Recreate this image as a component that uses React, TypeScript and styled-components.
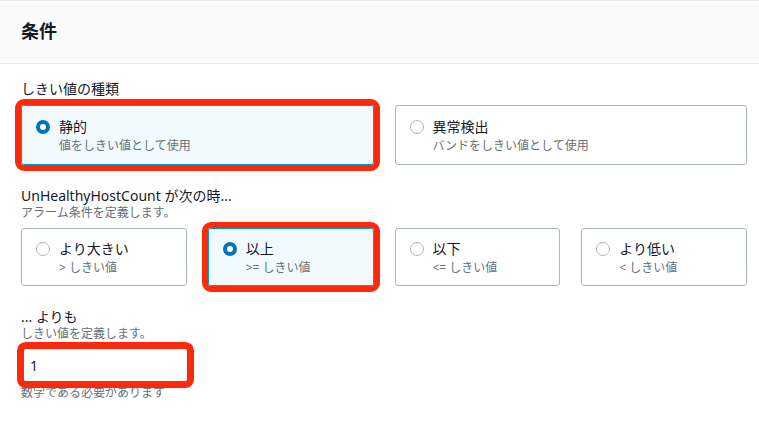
import React from 'react';
import styled, { createGlobalStyle } from 'styled-components';

const GlobalStyle = createGlobalStyle`
  html, body {
    margin: 0;
    padding: 0;
    background: #ffffff;
  }
  body {
    font-family: "Noto Sans", "Noto Sans CJK JP", sans-serif;
    color: #16191f;
    -webkit-font-smoothing: antialiased;
  }
`;

interface Option {
  key: string;
  title: string;
  description: string;
}

const thresholdTypes: Option[] = [
  { key: 'static', title: '静的', description: '値をしきい値として使用' },
  { key: 'anomaly', title: '異常検出', description: 'バンドをしきい値として使用' }
];

const conditions: Option[] = [
  { key: 'gt', title: 'より大きい', description: '> しきい値' },
  { key: 'gte', title: '以上', description: '>= しきい値' },
  { key: 'lte', title: '以下', description: '<= しきい値' },
  { key: 'lt', title: 'より低い', description: '< しきい値' }
];

const RadioTile = (props: { option: Option; checked: boolean; compact?: boolean }) => {
  const { option, checked, compact } = props;
  return (
    <Tile checked={checked} compact={!!compact}>
      <Radio checked={checked} />
      <TileText>
        <TileTitle>{option.title}</TileTitle>
        <TileDesc>{option.description}</TileDesc>
      </TileText>
    </Tile>
  );
};

const App = () => {
  return (
    <>
      <GlobalStyle />
      <Panel>
        <Header>
          <Title>条件</Title>
        </Header>
        <Body>
          <Field>
            <Label>しきい値の種類</Label>
            <Grid cols={2}>
              {thresholdTypes.map(option => (
                <RadioTile
                  key={option.key}
                  option={option}
                  checked={option.key === 'static'}
                />
              ))}
            </Grid>
          </Field>

          <Field>
            <div>
              <Label>UnHealthyHostCount が次の時...</Label>
              <Hint>アラーム条件を定義します。</Hint>
            </div>
            <Grid cols={4}>
              {conditions.map(option => (
                <RadioTile
                  key={option.key}
                  option={option}
                  checked={option.key === 'gte'}
                  compact
                />
              ))}
            </Grid>
          </Field>

          <Field>
            <div>
              <Label>... よりも</Label>
              <Hint>しきい値を定義します。</Hint>
            </div>
            <InputWrap>
              <Input defaultValue='1' />
            </InputWrap>
            <Help>数字である必要があります</Help>
          </Field>
        </Body>
      </Panel>
    </>
  );
};

const Panel = styled.div`
  width: 759px;
  height: 421px;
  overflow: hidden;
  background: #ffffff;
`;

const Header = styled.header`
  height: 64px;
  box-sizing: border-box;
  display: flex;
  align-items: center;
  padding: 0 21px 4px;
  background: #fafafa;
  border-top: 1px solid #eaeded;
  border-bottom: 1px solid #eaeded;
`;

const Title = styled.h2`
  margin: 0;
  font-size: 18px;
  font-weight: 700;
  color: #16191f;
`;

const Body = styled.div`
  padding: 16px 12px 0 21px;
  display: flex;
  flex-direction: column;
  gap: 22px;
`;

const Field = styled.div`
  display: flex;
  flex-direction: column;
  gap: 7px;
`;

const Label = styled.div`
  font-size: 14px;
  line-height: 18px;
  color: #16191f;
`;

const Hint = styled.div`
  font-size: 12px;
  line-height: 16px;
  color: #687078;
`;

const Grid = styled.div<{ cols: number }>`
  display: grid;
  grid-template-columns: repeat(${p => p.cols}, 1fr);
  column-gap: 21px;
  width: 726px;
`;

const Tile = styled.div<{ checked: boolean; compact: boolean }>`
  display: flex;
  align-items: flex-start;
  gap: 9px;
  height: ${p => (p.compact ? '58px' : '60px')};
  box-sizing: border-box;
  padding: ${p => (p.compact ? '10px 14px' : '11px 14px')};
  border: 1px solid ${p => (p.checked ? '#00a1c9' : '#aab7b8')};
  border-radius: 3px;
  background: ${p => (p.checked ? '#f1faff' : '#ffffff')};
  outline: ${p => (p.checked ? '6px solid #fb2a0c' : 'none')};
`;

const Radio = styled.span<{ checked: boolean }>`
  flex: none;
  width: 14px;
  height: 14px;
  margin-top: 3px;
  box-sizing: border-box;
  border-radius: 50%;
  border: ${p => (p.checked ? '4px solid #0073bb' : '1px solid #aab7b8')};
  background: #ffffff;
`;

const TileText = styled.div`
  display: flex;
  flex-direction: column;
`;

const TileTitle = styled.div`
  font-size: 14px;
  line-height: 20px;
  color: #16191f;
`;

const TileDesc = styled.div`
  font-size: 12px;
  line-height: 18px;
  color: #687078;
`;

const InputWrap = styled.div`
  position: relative;
  z-index: 1;
  width: 163px;
  margin-left: 3px;
  box-shadow: 0 0 0 7px #fb2a0c;
  border-radius: 3px;
  background: #ffffff;
`;

const Input = styled.input`
  display: block;
  width: 100%;
  height: 32px;
  box-sizing: border-box;
  padding: 0 6px;
  border: none;
  border-radius: 2px;
  font-family: "Noto Sans", "Noto Sans CJK JP", sans-serif;
  font-size: 14px;
  color: #16191f;
  outline: none;
`;

const Help = styled.div`
  font-size: 12px;
  line-height: 16px;
  color: #687078;
  margin-top: -3px;
`;

export default App;
